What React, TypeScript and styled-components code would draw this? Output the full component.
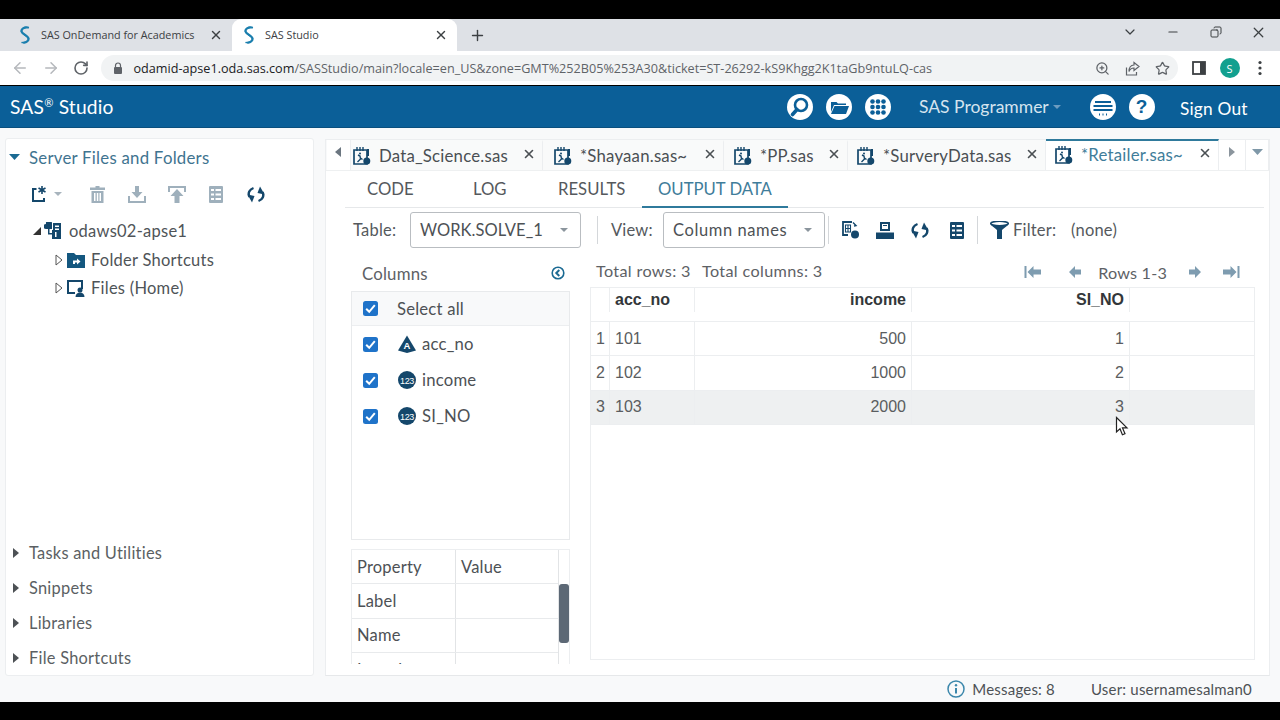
import React from "react";
import styled, { createGlobalStyle } from "styled-components";
import { ArrowLeft, ArrowRight, RotateCw, ZoomIn, Star, ChevronDown, Minus, X, Copy, Plus } from "lucide-react";

const GlobalStyle = createGlobalStyle`
  html, body { margin: 0; padding: 0; background: #000; }
  * { box-sizing: border-box; }
  svg { display: block; flex-shrink: 0; }
`;

const APP_FONT = `"Lato", "Open Sans", sans-serif`;
const CHROME_FONT = `"Open Sans", "Noto Sans", sans-serif`;

const Frame = styled.div`
  width: 1280px;
  height: 720px;
  padding: 19px 0 18px;
  background: #000;
  display: flex;
  flex-direction: column;
  overflow: hidden;
  position: relative;
  font-family: ${APP_FONT};
`;

/* browser chrome */
const TabStrip = styled.div`
  height: 32px;
  background: #dee1e6;
  display: flex;
  align-items: stretch;
  font-family: ${CHROME_FONT};
  font-size: 10.8px;
  color: #3c4043;
`;
const BrowserTab = styled.div<{ $active?: boolean }>`
  width: ${(p) => (p.$active ? 225 : 232)}px;
  display: flex;
  align-items: center;
  padding: 0 9px 0 ${(p) => (p.$active ? 10 : 18)}px;
  gap: 9px;
  background: ${(p) => (p.$active ? "#fff" : "transparent")};
  border-radius: 9px 9px 0 0;
`;
const BrowserTabTitle = styled.span`
  flex: 1;
  white-space: nowrap;
  padding-bottom: 2px;
`;
const NewTab = styled.div`
  width: 40px;
  display: flex;
  align-items: center;
  justify-content: center;
  color: #3c4043;
`;
const WindowButton = styled.div`
  width: 43px;
  height: 14px;
  display: flex;
  align-items: center;
  justify-content: center;
  color: #3c4043;
`;
const StripRight = styled.div`
  flex: 1;
  display: flex;
  justify-content: flex-end;
  padding: 6px 0 0;
`;
const AddressRow = styled.div`
  height: 34px;
  background: #fff;
  display: flex;
  align-items: center;
  padding: 0 0 0 5px;
`;
const NavButton = styled.div<{ $dim?: boolean }>`
  width: 30.5px;
  display: flex;
  justify-content: center;
  color: ${(p) => (p.$dim ? "#b5b8bc" : "#5f6368")};
`;
const Omnibox = styled.div`
  width: 1077px;
  height: 26px;
  margin: 0 0 0 4px;
  border-radius: 13px;
  background: #f1f3f4;
  display: flex;
  align-items: center;
  padding: 0 0 0 12px;
  font-family: ${CHROME_FONT};
  font-size: 12.65px;
  color: #202124;
`;
const Url = styled.span`
  margin-left: 11px;
  flex: 1;
  white-space: nowrap;
  span { color: #5f6368; }
`;
const OmniIcon = styled.div`
  width: 30px;
  display: flex;
  justify-content: center;
  color: #5f6368;
`;
const Avatar = styled.div`
  width: 20px;
  height: 20px;
  border-radius: 50%;
  background: #12a08f;
  color: #fff;
  font-family: ${CHROME_FONT};
  font-size: 11px;
  display: flex;
  align-items: center;
  justify-content: center;
  margin-left: 14px;
`;
const ChromeDots = styled.div`
  margin-left: 18px;
  display: flex;
  color: #3c4043;
`;
const PanelToggle = styled.div`
  margin-left: 14px;
  color: #3c4043;
`;

/* app header */
const AppHeader = styled.header`
  height: 42px;
  margin-top: 1px;
  background: #0b5f98;
  color: #fff;
  display: flex;
  align-items: center;
  padding-left: 10px;
  border-bottom: 1px solid #0a4f7e;
`;
const Brand = styled.div`
  font-size: 19.2px;
  width: 770px;
  letter-spacing: 0.2px;
  sup { font-size: 11px; vertical-align: 7px; line-height: 0; }
`;
const HeaderIcon = styled.div`
  width: 39px;
  display: flex;
  justify-content: center;
`;
const HelpBubble = styled.div`
  width: 26px;
  height: 26px;
  border-radius: 50%;
  background: #fff;
  color: #0b5f98;
  font: bold 19px "Liberation Sans", sans-serif;
  display: flex;
  align-items: center;
  justify-content: center;
`;
const RoleMenu = styled.div`
  width: 186px;
  padding-left: 22px;
  font-size: 17.5px;
  color: #d5e4ef;
  display: flex;
  align-items: center;
  gap: 4px;
`;
const Caret = styled.span<{ $color?: string; $size?: number }>`
  width: 0;
  height: 0;
  border-left: ${(p) => p.$size ?? 4}px solid transparent;
  border-right: ${(p) => p.$size ?? 4}px solid transparent;
  border-top: ${(p) => p.$size ?? 4}px solid ${(p) => p.$color ?? "#6d9cc0"};
`;
const SignOut = styled.div`
  margin-left: 19px;
  padding-top: 3px;
  font-size: 17.3px;
  letter-spacing: 0.2px;
`;

/* workspace */
const Workspace = styled.div`
  flex: 1;
  min-height: 0;
  background: #f8f9fa;
  display: flex;
  flex-direction: column;
`;
const Panels = styled.div`
  flex: 1;
  min-height: 0;
  display: flex;
  padding: 10px 10px 0 5px;
  gap: 11px;
`;
const Sidebar = styled.aside`
  width: 309px;
  background: #fff;
  border: 1px solid #eceef0;
  border-radius: 3px;
  display: flex;
  flex-direction: column;
  letter-spacing: 0.25px;
`;
const SectionHead = styled.div<{ $open?: boolean }>`
  height: ${(p) => (p.$open ? 36 : 35)}px;
  display: flex;
  align-items: center;
  padding-left: ${(p) => (p.$open ? 3 : 5)}px;
  gap: ${(p) => (p.$open ? 9 : 7)}px;
  font-size: ${(p) => (p.$open ? 16.8 : 16.4)}px;
  color: ${(p) => (p.$open ? "#3f7490" : "#5b5f63")};
`;
const SideTools = styled.div`
  height: 38px;
  display: flex;
  align-items: center;
  padding-left: 20px;
`;
const SideTool = styled.div`
  width: 39.5px;
  display: flex;
  align-items: center;
  justify-content: center;
`;
const NewTool = styled.div`
  width: 52px;
  padding-left: 5px;
  display: flex;
  align-items: center;
  gap: 5px;
`;
const Tree = styled.div`
  margin-top: 4px;
  flex: 1;
  font-size: 16.5px;
  color: #4f5458;
`;
const TreeRow = styled.div<{ $child?: boolean }>`
  height: 28.5px;
  display: flex;
  align-items: center;
  padding-left: ${(p) => (p.$child ? 48 : 26)}px;
  gap: ${(p) => (p.$child ? 2 : 1)}px;
  span { margin-left: ${(p) => (p.$child ? 4 : 6)}px; }
`;
const Sections = styled.div`
  margin-top: auto;
`;

const Main = styled.main`
  width: 945px;
  margin-top: 1px;
  background: #fff;
  border: 1px solid #eceef0;
  border-bottom-color: #e6e8ea;
  display: flex;
  flex-direction: column;
  letter-spacing: 0.2px;
`;
const FileTabs = styled.div`
  height: 31px;
  display: flex;
  align-items: stretch;
  padding-left: 1px;
  background: #f8f9fa;
  border-bottom: 1px solid #eef0f1;
`;
const ScrollTab = styled.div<{ $w: number }>`
  width: ${(p) => p.$w}px;
  display: flex;
  align-items: center;
  justify-content: center;
  background: #fff;
  border-right: 1px solid #eceef0;
  padding-bottom: 6px;
`;
const FileTab = styled.div<{ $w: number; $pad: number; $active?: boolean }>`
  width: ${(p) => p.$w}px;
  display: flex;
  align-items: center;
  gap: 8px;
  padding: 0 0 2px ${(p) => p.$pad}px;
  font-size: 16.8px;
  color: ${(p) => (p.$active ? "#3f7d9a" : "#4a4f53")};
  background: ${(p) => (p.$active ? "#fff" : "#f9fafa")};
  border-right: 1px solid #eceef0;
  border-top: 2px solid ${(p) => (p.$active ? "#2f7a9c" : "transparent")};
  margin-top: ${(p) => (p.$active ? -1 : 0)}px;
  white-space: nowrap;
`;
const TabClose = styled.div`
  margin-left: auto;
  margin-right: 6px;
  margin-bottom: 3px;
  color: #4b5054;
`;
const SubTabs = styled.nav`
  height: 37px;
  margin: 0 5px 0 19px;
  display: grid;
  grid-template-columns: 106px 85px 100px 146px;
  padding-left: 6px;
  border-bottom: 1px solid #e6e8ea;
  font-size: 16.7px;
  letter-spacing: 0;
`;
const SubTab = styled.div<{ $active?: boolean }>`
  display: flex;
  align-items: center;
  padding-left: 16px;
  white-space: nowrap;
  color: ${(p) => (p.$active ? "#3f7d9a" : "#55595d")};
  border-bottom: 2px solid ${(p) => (p.$active ? "#2f7a9c" : "transparent")};
  margin-bottom: -1px;
`;
const TableBar = styled.div`
  height: 36px;
  margin-top: 4px;
  padding-left: 27px;
  display: flex;
  align-items: center;
  font-size: 16.5px;
  color: #55595d;
`;
const BarLabel = styled.span<{ $w: number; $ml?: number }>`
  width: ${(p) => p.$w}px;
  margin-left: ${(p) => p.$ml ?? 0}px;
  white-space: nowrap;
`;
const SelectBox = styled.div<{ $w: number; $track: number }>`
  width: ${(p) => p.$w}px;
  height: 36px;
  border: 1px solid #b9bdc1;
  border-radius: 3px;
  display: flex;
  align-items: center;
  justify-content: space-between;
  padding: 0 12px 0 9px;
  color: #4d5155;
  white-space: nowrap;
  letter-spacing: ${(p) => p.$track}px;
`;
const BarSep = styled.span<{ $ml: number }>`
  width: 1px;
  height: 28px;
  background: #d4d7da;
  margin-left: ${(p) => p.$ml}px;
`;
const BarTool = styled.div<{ $w: number }>`
  width: ${(p) => p.$w}px;
  display: flex;
  justify-content: center;
`;
const FilterGlyph = styled.div`
  margin: 0 4px 0 12px;
`;
const Content = styled.div`
  flex: 1;
  min-height: 0;
  display: flex;
  padding-left: 25px;
  margin-top: 9px;
`;
const ColumnsPane = styled.section`
  width: 219px;
  display: flex;
  flex-direction: column;
`;
const PaneHead = styled.div`
  height: 34px;
  display: flex;
  align-items: center;
  justify-content: space-between;
  padding: 0 5px 2px 11px;
  font-size: 16.8px;
  color: #5d6165;
`;
const ColumnList = styled.div`
  height: 249px;
  border: 1px solid #e8eaec;
  font-size: 16.7px;
  color: #4d5155;
`;
const ColumnRow = styled.div<{ $head?: boolean }>`
  height: ${(p) => (p.$head ? 34 : 36)}px;
  display: grid;
  grid-template-columns: 37px 1fr;
  align-items: center;
  background: ${(p) => (p.$head ? "#f8f9fa" : "transparent")};
  border-bottom: ${(p) => (p.$head ? "1px solid #eceef0" : "none")};
`;
const CheckCell = styled.div`
  padding-left: 11px;
`;
const ColumnName = styled.div`
  display: flex;
  align-items: center;
  gap: 5px;
  padding-left: 8px;
`;
const PropertyGrid = styled.div`
  height: 115px;
  margin-top: 9px;
  overflow: hidden;
  display: grid;
  grid-template-columns: 1fr 11px;
  border: 1px solid #eceef0;
  border-bottom: none;
  font-size: 16.5px;
  color: #4d5155;
`;
const PropertyRow = styled.div`
  height: 34.3px;
  display: grid;
  grid-template-columns: 103px 1fr;
  border-bottom: 1px solid #e8eaec;
`;
const PropertyCell = styled.div`
  display: flex;
  align-items: center;
  padding-left: 5px;
  white-space: nowrap;
  & + & { border-left: 1px solid #e2e4e6; }
`;
const ScrollTrack = styled.div`
  border-left: 1px solid #e2e4e6;
  padding-top: 34px;
`;
const ScrollThumb = styled.div`
  width: 10px;
  height: 59px;
  border-radius: 3px;
  background: #5c6875;
`;
const DataPane = styled.section`
  width: 665px;
  margin-left: 20px;
  display: flex;
  flex-direction: column;
`;
const PagerRow = styled.div`
  height: 30px;
  display: flex;
  align-items: center;
  padding: 0 0 3px 6px;
  font-size: 16.2px;
  letter-spacing: 0.35px;
  color: #5d6165;
`;
const Totals = styled.span`
  width: 106px;
  white-space: nowrap;
`;
const Pager = styled.div`
  margin-left: auto;
  display: flex;
  align-items: center;
  margin-right: 15px;
  padding-top: 3px;
  letter-spacing: 0.2px;
`;
const PagerButton = styled.div<{ $w: number; $pl?: number }>`
  width: ${(p) => p.$w}px;
  padding-left: ${(p) => p.$pl ?? 0}px;
  display: flex;
  justify-content: center;
`;
const GridPanel = styled.div`
  height: 373px;
  border: 1px solid #eceef0;
  font-family: "Liberation Sans", sans-serif;
  font-size: 16px;
  letter-spacing: 0;
  color: #5a5d60;
`;
const GridRow = styled.div<{ $head?: boolean; $hover?: boolean }>`
  height: ${(p) => (p.$head ? 34 : 34.3)}px;
  display: grid;
  grid-template-columns: 19px 85px 217px 218px 1fr;
  font-weight: ${(p) => (p.$head ? 700 : 400)};
  color: ${(p) => (p.$head ? "#33373a" : "inherit")};
  background: ${(p) => (p.$hover ? "#eef0f1" : "#fff")};
  border-bottom: 1px solid #eceef0;
  padding-bottom: ${(p) => (p.$head ? 9 : 0)}px;
`;
const GridCell = styled.div<{ $num?: boolean }>`
  display: flex;
  align-items: center;
  padding: 0 5px;
  justify-content: ${(p) => (p.$num ? "flex-end" : "flex-start")};
  border-right: 1px solid #eceef0;
  &:last-child { border-right: none; }
`;
const IndexCell = styled(GridCell)`
  padding: 0 0 0 5px;
`;
const StatusBar = styled.footer`
  height: 26px;
  display: flex;
  align-items: center;
  justify-content: flex-end;
  padding: 0 28px 0 0;
  font-size: 15px;
  letter-spacing: 0.2px;
  color: #4d5155;
`;
const Messages = styled.div`
  display: flex;
  align-items: center;
  gap: 7px;
  margin-right: 36px;
`;
const Pointer = styled.svg`
  position: absolute;
  left: 1115px;
  top: 416px;
`;

/* drawings */
const SasLogo = () => (
  <svg width="14" height="18" viewBox="0 0 14 18" fill="none" stroke="#1b7fae" strokeWidth="2.2" strokeLinecap="round">
    <path d="M10 1.500C6 1 3 3 3.500 5.500c.5 2.500 6.500 4 7 7 .3 2-2 4-4.500 4.200" />
    <path d="M4 16.500C8 17 11 15 10.500 12.500 10 10 4 8.500 3.500 5.500 3.200 3.500 5.500 1.500 8 1.300" strokeWidth="1.400" />
  </svg>
);

const Lock = () => (
  <svg width="10" height="12" viewBox="0 0 10 12" fill="#5f6368">
    <rect x="1" y="5" width="8" height="7" rx="1" />
    <path d="M2.500 5V3.500a2.500 2.500 0 0 1 5 0V5" fill="none" stroke="#5f6368" strokeWidth="1.200" />
  </svg>
);

const ShareIcon = () => (
  <svg width="15" height="15" viewBox="0 0 15 15" fill="none" stroke="#5f6368" strokeWidth="1.200">
    <path d="M1.500 6.500V14h10v-3" />
    <path d="M9 1.500 14 5.500 9 9.500V7C6.500 7 5 8 4 10.500 4 7 5.500 4.200 9 4z" />
  </svg>
);

const PanelIcon = () => (
  <svg width="14" height="14" viewBox="0 0 14 14">
    <rect x="1" y="1" width="12" height="12" fill="none" stroke="#3c4043" strokeWidth="1.800" />
    <rect x="8" y="1" width="5" height="12" fill="#3c4043" />
  </svg>
);

const Dots = () => (
  <svg width="4" height="16" viewBox="0 0 4 16" fill="#3c4043">
    <circle cx="2" cy="2.500" r="1.600" />
    <circle cx="2" cy="8" r="1.600" />
    <circle cx="2" cy="13.500" r="1.600" />
  </svg>
);

const HeaderGlyph = ({ children }: { children: React.ReactNode }) => (
  <svg width="26" height="26" viewBox="0 0 26 26">
    <circle cx="13" cy="13" r="13" fill="#fff" />
    {children}
  </svg>
);

const SearchGlyph = () => (
  <HeaderGlyph>
    <circle cx="14" cy="11" r="6" fill="none" stroke="#0b5f98" strokeWidth="2.600" />
    <path d="M10 15.500 5.500 20.500" stroke="#0b5f98" strokeWidth="3.600" strokeLinecap="round" />
  </HeaderGlyph>
);

const FolderGlyph = () => (
  <HeaderGlyph>
    <path d="M5 9.500V8h5.500l1.500 1.500h8v1.500H8L5 18z" fill="#0b5f98" />
    <path d="M8.500 12H23l-3 8H5z" fill="#0b5f98" />
  </HeaderGlyph>
);

const AppsGlyph = () => (
  <HeaderGlyph>
    {[7.5, 13, 18.5].map((y) =>
      [7.5, 13, 18.5].map((x) => <circle key={`${x}-${y}`} cx={x} cy={y} r="2.300" fill="#0b5f98" />)
    )}
  </HeaderGlyph>
);

const MenuGlyph = () => (
  <HeaderGlyph>
    <path d="M5 8h16M3.500 12h19M3.500 16h19" stroke="#0b5f98" strokeWidth="2" />
    <path d="M9 20.500h1M12.500 20.500h1M16 20.500h1" stroke="#0b5f98" strokeWidth="2" />
  </HeaderGlyph>
);

const NewIcon = () => (
  <svg width="18" height="18" viewBox="0 0 18 18" fill="#14476b">
    <path d="M1 3h4.500v2H3v10h9v-2h2v4H1z" />
    <path d="M10.200 1h1.600v2.600l2.300-1.300.8 1.400L12.600 5l2.300 1.300-.8 1.400-2.300-1.300V9h-1.600V6.400l-2.300 1.300-.8-1.400L9.400 5 7.100 3.700l.8-1.400 2.300 1.300z" />
  </svg>
);
const TrashIcon = () => (
  <svg width="15" height="17" viewBox="0 0 15 17" fill="#9fb0bc">
    <path d="M5.500 0h4v1.500H15V4H0V1.500h5.500z" />
    <path d="M1.500 5H13.500V17H1.500zM4 7v8h1.500V7zM6.800 7v8h1.500V7zM9.500 7v8H11V7z" fillRule="evenodd" />
  </svg>
);
const DownloadIcon = () => (
  <svg width="18" height="17" viewBox="0 0 18 17" fill="#9fb0bc">
    <path d="M7 0h4v6h3.500L9 12 3.500 6H7z" />
    <path d="M0 10h2v5h14v-5h2v7H0z" />
  </svg>
);
const UploadIcon = () => (
  <svg width="18" height="17" viewBox="0 0 18 17" fill="#9fb0bc">
    <path d="M0 0h18v2H0z" />
    <path d="M9 3l6.500 7H11.500v7h-5v-7H2.500z" />
    <path d="M0 2h2v4H0zM16 2h2v4h-2z" />
  </svg>
);
const ListIcon = ({ color = "#9fb0bc" }: { color?: string }) => (
  <svg width="14" height="17" viewBox="0 0 14 17">
    <rect width="14" height="17" rx="1" fill={color} />
    <path d="M2 3h3v2H2zM2 7.500h3v2H2zM2 12h3v2H2zM6.500 3h5.500v2H6.500zM6.500 7.500h5.500v2H6.500zM6.500 12h5.500v2H6.500z" fill="#fff" />
  </svg>
);
const RefreshIcon = () => (
  <svg width="18" height="17" viewBox="0 0 18 17" fill="none" stroke="#14476b" strokeWidth="2.400">
    <path d="M6.500 2C2.500 3.500 .5 7 2.500 11" />
    <path d="M11.500 15c4-1.500 6-5 4-9" />
    <path d="M.5 8.500 7.500 10 5 16.500z" fill="#14476b" stroke="none" />
    <path d="M17.500 8.500 10.500 7 13 .5z" fill="#14476b" stroke="none" />
  </svg>
);
const ServerIcon = () => (
  <svg width="18" height="18" viewBox="0 0 18 18" fill="#14476b">
    <path d="M8 1a3 3 0 0 0-6 1 2.500 2.500 0 0 0 0 5h6z" />
    <path d="M9 1h8v16H8v-9h1zM11 3.500v1.500h4V3.500zM11 6.500V8h4V6.500zM11 10v5h1.500v-5z" fillRule="evenodd" />
    <path d="M4 7h1.500v4H8v1.500H4z" />
  </svg>
);
const ShortcutIcon = () => (
  <svg width="18" height="16" viewBox="0 0 18 16">
    <path d="M0 1h7l2 2h9v13H0z" fill="#14577f" />
    <path d="M6 12V8.500h4V6.500l3.500 3-3.500 3V10.500H8V12z" fill="#fff" />
  </svg>
);
const HomeFilesIcon = () => (
  <svg width="18" height="17" viewBox="0 0 18 17" fill="#14476b">
    <path d="M0 0h16v9h-2V2H2v10h6v2H0z" />
    <circle cx="13" cy="10" r="2.500" />
    <path d="M8.500 17c0-3 2-4.500 4.500-4.500s4.500 1.500 4.500 4.500z" />
  </svg>
);
const ProgramIcon = () => (
  <svg width="19" height="19" viewBox="0 0 19 19" fill="none">
    <path d="M2 4h13v14H2z" stroke="#14476b" strokeWidth="1.700" />
    <path d="M5 1v4M8 1v4M11 1v4" stroke="#14476b" strokeWidth="1.400" />
    <path d="M6 9l2 1 .5 3-3 3M8.500 12l2 1.500" stroke="#14476b" strokeWidth="1.400" />
    <circle cx="8" cy="7.500" r="1" fill="#14476b" />
    <path d="M16 3v7" stroke="#14476b" strokeWidth="2" />
    <circle cx="14.800" cy="15" r="3.500" fill="#14476b" />
  </svg>
);
const TableProps = () => (
  <svg width="19" height="18" viewBox="0 0 19 18" fill="none">
    <path d="M11 1H2v13h5" stroke="#14476b" strokeWidth="1.800" />
    <path d="M4.500 4h5v7h-5zM7 4v7M4.500 7.500h5" stroke="#14476b" strokeWidth="1.100" />
    <path d="M12 1.500l3 3-2 .5" stroke="#14476b" strokeWidth="1.400" />
    <circle cx="14" cy="13.500" r="4" fill="#14476b" />
  </svg>
);
const PrintIcon = () => (
  <svg width="18" height="17" viewBox="0 0 18 17" fill="#14476b">
    <path d="M4 0h10v9H4zM6 2v5h6V2z" fillRule="evenodd" />
    <path d="M7 3h4v1H7z" />
    <path d="M0 10.500h18V17H0z" />
  </svg>
);
const FunnelIcon = () => (
  <svg width="19" height="18" viewBox="0 0 19 18">
    <ellipse cx="9.500" cy="2.500" rx="8.800" ry="2.200" fill="none" stroke="#14476b" strokeWidth="1.500" />
    <path d="M0.500 3.500C3 6 6 8 7 9v9h5V9c1-1 4-3 6.500-5.500-4 2-14 2-18 0z" fill="#14476b" />
  </svg>
);
const PagerIcon = ({ edge, back }: { edge?: boolean; back?: boolean }) => (
  <svg width="18" height="12" viewBox="0 0 18 12" fill="#7e9cb0" style={back ? undefined : { transform: "scaleX(-1)" }}>
    {edge && <rect x="0.500" y="0" width="2" height="12" />}
    <path d={edge ? "M3.500 6 9.500 0v3.500H17v5H9.500V12z" : "M3 6 9 0v3.500h6v5H9V12z"} />
  </svg>
);
const CheckBox = () => (
  <svg width="15" height="15" viewBox="0 0 15 15">
    <rect width="15" height="15" rx="2.500" fill="#1f73c9" />
    <path d="M3.200 7.800 6.200 10.800 11.800 4.200" fill="none" stroke="#fff" strokeWidth="2" />
  </svg>
);
const CollapseIcon = () => (
  <svg width="14" height="14" viewBox="0 0 14 14" fill="none" stroke="#1b6a93" strokeWidth="1.600">
    <circle cx="7" cy="7" r="5.800" />
    <path d="M8.300 4 5.300 7l3 3" strokeWidth="2" />
  </svg>
);
const CharType = () => (
  <svg width="20" height="18" viewBox="0 0 20 18">
    <path d="M10 0.500 19 15.500 10 18 1 15.500z" fill="#14476b" />
    <text x="10" y="14" textAnchor="middle" fontSize="9.500" fontWeight="700" fill="#fff" fontFamily="Liberation Sans, sans-serif">A</text>
  </svg>
);
const NumType = () => (
  <svg width="20" height="18" viewBox="0 0 20 18">
    <circle cx="10" cy="9" r="9" fill="#14476b" />
    <text x="10" y="12.500" textAnchor="middle" fontSize="9" letterSpacing="-0.3" fill="#fff" fontFamily="Liberation Sans, sans-serif">123</text>
  </svg>
);
const InfoIcon = () => (
  <svg width="18" height="18" viewBox="0 0 18 18" fill="none">
    <circle cx="9" cy="9" r="8" stroke="#3b87ab" strokeWidth="1.500" />
    <circle cx="9" cy="5.200" r="1.200" fill="#3b87ab" />
    <path d="M9 8v5.500" stroke="#3b87ab" strokeWidth="2" />
  </svg>
);
const Tri = ({ dir, color = "#4d5155", hollow }: { dir: "right" | "down" | "corner" | "left"; color?: string; hollow?: boolean }) => {
  const d = { right: "M2 1l6 5-6 5z", left: "M8 1 2 6l6 5z", down: "M0 3h11L5.500 9z", corner: "M9 2v8H1z" }[dir];
  return (
    <svg width="11" height="12" viewBox="0 0 11 12">
      <path d={d} fill={hollow ? "#fff" : color} stroke={hollow ? "#555" : "none"} />
    </svg>
  );
};

const fileTabs = [
  { name: "Data_Science.sas", w: 192, pad: 1 },
  { name: "*Shayaan.sas~", w: 181, pad: 10 },
  { name: "*PP.sas", w: 124, pad: 9 },
  { name: "*SurveryData.sas", w: 198, pad: 8 },
  { name: "*Retailer.sas~", w: 173, pad: 8, active: true },
];

const rows = [
  { i: 1, acc: 101, income: 500, no: 1 },
  { i: 2, acc: 102, income: 1000, no: 2 },
  { i: 3, acc: 103, income: 2000, no: 3 },
];

export default function App() {
  return (
    <Frame>
      <GlobalStyle />
      <TabStrip>
        <BrowserTab>
          <SasLogo />
          <BrowserTabTitle>SAS OnDemand for Academics</BrowserTabTitle>
          <X size={14} strokeWidth={2.4} />
        </BrowserTab>
        <BrowserTab $active>
          <SasLogo />
          <BrowserTabTitle>SAS Studio</BrowserTabTitle>
          <X size={14} strokeWidth={2.4} />
        </BrowserTab>
        <NewTab>
          <Plus size={17} strokeWidth={2} />
        </NewTab>
        <StripRight>
          <WindowButton><ChevronDown size={16} strokeWidth={1.8} /></WindowButton>
          <WindowButton><Minus size={14} strokeWidth={2} /></WindowButton>
          <WindowButton><Copy size={12} strokeWidth={2} style={{ transform: "scaleX(-1)" }} /></WindowButton>
          <WindowButton><X size={17} strokeWidth={1.8} /></WindowButton>
        </StripRight>
      </TabStrip>

      <AddressRow>
        <NavButton $dim><ArrowLeft size={18} /></NavButton>
        <NavButton $dim><ArrowRight size={18} /></NavButton>
        <NavButton><RotateCw size={16} strokeWidth={2.4} /></NavButton>
        <Omnibox>
          <Lock />
          <Url>
            odamid-apse1.oda.sas.com<span>/SASStudio/main?locale=en_US&zone=GMT%252B05%253A30&ticket=ST-26292-kS9Khgg2K1taGb9ntuLQ-cas</span>
          </Url>
          <OmniIcon><ZoomIn size={15} /></OmniIcon>
          <OmniIcon><ShareIcon /></OmniIcon>
          <OmniIcon><Star size={15} /></OmniIcon>
        </Omnibox>
        <PanelToggle><PanelIcon /></PanelToggle>
        <Avatar>S</Avatar>
        <ChromeDots><Dots /></ChromeDots>
      </AddressRow>

      <AppHeader>
        <Brand>SAS<sup>®</sup> Studio</Brand>
        <HeaderIcon><SearchGlyph /></HeaderIcon>
        <HeaderIcon><FolderGlyph /></HeaderIcon>
        <HeaderIcon><AppsGlyph /></HeaderIcon>
        <RoleMenu>SAS Programmer <Caret /></RoleMenu>
        <HeaderIcon><MenuGlyph /></HeaderIcon>
        <HeaderIcon><HelpBubble>?</HelpBubble></HeaderIcon>
        <SignOut>Sign Out</SignOut>
      </AppHeader>

      <Workspace>
        <Panels>
          <Sidebar>
            <SectionHead $open>
              <Tri dir="down" color="#1b6a93" />
              Server Files and Folders
            </SectionHead>
            <SideTools>
              <NewTool>
                <NewIcon />
                <Caret $color="#a8b4bd" />
              </NewTool>
              <SideTool><TrashIcon /></SideTool>
              <SideTool><DownloadIcon /></SideTool>
              <SideTool><UploadIcon /></SideTool>
              <SideTool><ListIcon /></SideTool>
              <SideTool><RefreshIcon /></SideTool>
            </SideTools>
            <Tree>
              <TreeRow>
                <Tri dir="corner" color="#333" />
                <ServerIcon />
                <span>odaws02-apse1</span>
              </TreeRow>
              <TreeRow $child>
                <Tri dir="right" hollow />
                <ShortcutIcon />
                <span>Folder Shortcuts</span>
              </TreeRow>
              <TreeRow $child>
                <Tri dir="right" hollow />
                <HomeFilesIcon />
                <span>Files (Home)</span>
              </TreeRow>
            </Tree>
            <Sections>
              {["Tasks and Utilities", "Snippets", "Libraries", "File Shortcuts"].map((s) => (
                <SectionHead key={s}>
                  <Tri dir="right" />
                  {s}
                </SectionHead>
              ))}
            </Sections>
          </Sidebar>

          <Main>
            <FileTabs>
              <ScrollTab $w={24}><Tri dir="left" color="#6b7680" /></ScrollTab>
              {fileTabs.map((t) => (
                <FileTab key={t.name} $w={t.w} $pad={t.pad} $active={t.active}>
                  <ProgramIcon />
                  {t.name}
                  <TabClose><X size={14} strokeWidth={2.8} /></TabClose>
                </FileTab>
              ))}
              <ScrollTab $w={27}><Tri dir="right" color="#8b959d" /></ScrollTab>
              <ScrollTab $w={23}><Tri dir="down" color="#7f98a8" /></ScrollTab>
            </FileTabs>
            <SubTabs>
              <SubTab>CODE</SubTab>
              <SubTab>LOG</SubTab>
              <SubTab>RESULTS</SubTab>
              <SubTab $active>OUTPUT DATA</SubTab>
            </SubTabs>
            <TableBar>
              <BarLabel $w={57}>Table:</BarLabel>
              <SelectBox $w={171} $track={0.05}>WORK.SOLVE_1 <Caret $color="#8b959d" /></SelectBox>
              <BarSep $ml={16} />
              <BarLabel $w={52} $ml={13}>View:</BarLabel>
              <SelectBox $w={162} $track={0.6}>Column names <Caret $color="#8b959d" /></SelectBox>
              <BarSep $ml={3} />
              <BarTool $w={42}><TableProps /></BarTool>
              <BarTool $w={28}><PrintIcon /></BarTool>
              <BarTool $w={42}><RefreshIcon /></BarTool>
              <BarTool $w={32}><ListIcon color="#14476b" /></BarTool>
              <BarSep $ml={4} />
              <FilterGlyph><FunnelIcon /></FilterGlyph>
              <BarLabel $w={58}>Filter:</BarLabel>
              <span>(none)</span>
            </TableBar>
            <Content>
              <ColumnsPane>
                <PaneHead>
                  Columns
                  <CollapseIcon />
                </PaneHead>
                <ColumnList>
                  <ColumnRow $head>
                    <CheckCell><CheckBox /></CheckCell>
                    <ColumnName>Select all</ColumnName>
                  </ColumnRow>
                  <ColumnRow>
                    <CheckCell><CheckBox /></CheckCell>
                    <ColumnName><CharType />acc_no</ColumnName>
                  </ColumnRow>
                  <ColumnRow>
                    <CheckCell><CheckBox /></CheckCell>
                    <ColumnName><NumType />income</ColumnName>
                  </ColumnRow>
                  <ColumnRow>
                    <CheckCell><CheckBox /></CheckCell>
                    <ColumnName><NumType />SI_NO</ColumnName>
                  </ColumnRow>
                </ColumnList>
                <PropertyGrid>
                  <div>
                    {[["Property", "Value"], ["Label", ""], ["Name", ""], ["Length", ""]].map(([a, b]) => (
                      <PropertyRow key={a}>
                        <PropertyCell>{a}</PropertyCell>
                        <PropertyCell>{b}</PropertyCell>
                      </PropertyRow>
                    ))}
                  </div>
                  <ScrollTrack><ScrollThumb /></ScrollTrack>
                </PropertyGrid>
              </ColumnsPane>

              <DataPane>
                <PagerRow>
                  <Totals>Total rows: 3</Totals>
                  <span>Total columns: 3</span>
                  <Pager>
                    <PagerButton $w={18}><PagerIcon edge back /></PagerButton>
                    <PagerButton $w={56} $pl={10}><PagerIcon back /></PagerButton>
                    <span>Rows 1-3</span>
                    <PagerButton $w={55}><PagerIcon /></PagerButton>
                    <PagerButton $w={18}><PagerIcon edge /></PagerButton>
                  </Pager>
                </PagerRow>
                <GridPanel>
                  <GridRow $head>
                    <GridCell />
                    <GridCell>acc_no</GridCell>
                    <GridCell $num>income</GridCell>
                    <GridCell $num>SI_NO</GridCell>
                    <GridCell />
                  </GridRow>
                  {rows.map((r) => (
                    <GridRow key={r.i} $hover={r.i === 3}>
                      <IndexCell>{r.i}</IndexCell>
                      <GridCell>{r.acc}</GridCell>
                      <GridCell $num>{r.income}</GridCell>
                      <GridCell $num>{r.no}</GridCell>
                      <GridCell />
                    </GridRow>
                  ))}
                </GridPanel>
              </DataPane>
            </Content>
          </Main>
        </Panels>
        <StatusBar>
          <Messages>
            <InfoIcon />
            Messages: 8
          </Messages>
          User: usernamesalman0
        </StatusBar>
      </Workspace>

      <Pointer width="14" height="21" viewBox="0 0 14 21">
        <path d="M1.500 1.500V16l3.500-3.200 2.400 6 2.600-1.100-2.500-5.800H12z" fill="#fff" stroke="#222" strokeWidth="1.200" />
      </Pointer>
    </Frame>
  );
}
